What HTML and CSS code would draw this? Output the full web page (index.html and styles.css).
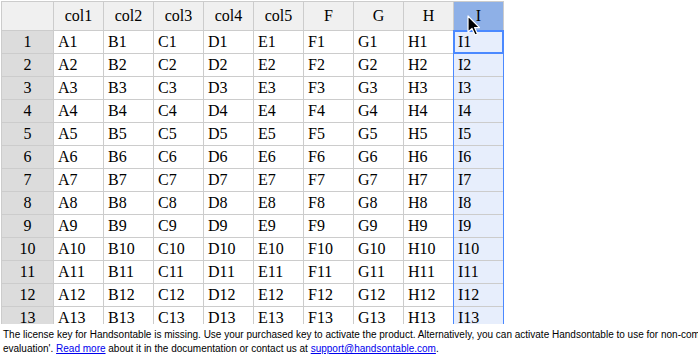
FILE: index.html
```html
<!DOCTYPE html>
<html>
<head>
<meta charset="utf-8">
<link rel="stylesheet" href="styles.css">
</head>
<body>
<div class="hot">
  <div class="grid">
    <div class="corner"></div>
    <div class="ch">col1</div><div class="ch">col2</div><div class="ch">col3</div><div class="ch">col4</div><div class="ch">col5</div><div class="ch">F</div><div class="ch">G</div><div class="ch">H</div><div class="ch ch-active">I</div>
    <div class="rh">1</div><div class="c">A1</div><div class="c">B1</div><div class="c">C1</div><div class="c">D1</div><div class="c">E1</div><div class="c">F1</div><div class="c">G1</div><div class="c">H1</div><div class="c sel">I1</div>
    <div class="rh">2</div><div class="c">A2</div><div class="c">B2</div><div class="c">C2</div><div class="c">D2</div><div class="c">E2</div><div class="c">F2</div><div class="c">G2</div><div class="c">H2</div><div class="c sel">I2</div>
    <div class="rh">3</div><div class="c">A3</div><div class="c">B3</div><div class="c">C3</div><div class="c">D3</div><div class="c">E3</div><div class="c">F3</div><div class="c">G3</div><div class="c">H3</div><div class="c sel">I3</div>
    <div class="rh">4</div><div class="c">A4</div><div class="c">B4</div><div class="c">C4</div><div class="c">D4</div><div class="c">E4</div><div class="c">F4</div><div class="c">G4</div><div class="c">H4</div><div class="c sel">I4</div>
    <div class="rh">5</div><div class="c">A5</div><div class="c">B5</div><div class="c">C5</div><div class="c">D5</div><div class="c">E5</div><div class="c">F5</div><div class="c">G5</div><div class="c">H5</div><div class="c sel">I5</div>
    <div class="rh">6</div><div class="c">A6</div><div class="c">B6</div><div class="c">C6</div><div class="c">D6</div><div class="c">E6</div><div class="c">F6</div><div class="c">G6</div><div class="c">H6</div><div class="c sel">I6</div>
    <div class="rh">7</div><div class="c">A7</div><div class="c">B7</div><div class="c">C7</div><div class="c">D7</div><div class="c">E7</div><div class="c">F7</div><div class="c">G7</div><div class="c">H7</div><div class="c sel">I7</div>
    <div class="rh">8</div><div class="c">A8</div><div class="c">B8</div><div class="c">C8</div><div class="c">D8</div><div class="c">E8</div><div class="c">F8</div><div class="c">G8</div><div class="c">H8</div><div class="c sel">I8</div>
    <div class="rh">9</div><div class="c">A9</div><div class="c">B9</div><div class="c">C9</div><div class="c">D9</div><div class="c">E9</div><div class="c">F9</div><div class="c">G9</div><div class="c">H9</div><div class="c sel">I9</div>
    <div class="rh">10</div><div class="c">A10</div><div class="c">B10</div><div class="c">C10</div><div class="c">D10</div><div class="c">E10</div><div class="c">F10</div><div class="c">G10</div><div class="c">H10</div><div class="c sel">I10</div>
    <div class="rh">11</div><div class="c">A11</div><div class="c">B11</div><div class="c">C11</div><div class="c">D11</div><div class="c">E11</div><div class="c">F11</div><div class="c">G11</div><div class="c">H11</div><div class="c sel">I11</div>
    <div class="rh">12</div><div class="c">A12</div><div class="c">B12</div><div class="c">C12</div><div class="c">D12</div><div class="c">E12</div><div class="c">F12</div><div class="c">G12</div><div class="c">H12</div><div class="c sel">I12</div>
    <div class="rh">13</div><div class="c">A13</div><div class="c">B13</div><div class="c">C13</div><div class="c">D13</div><div class="c">E13</div><div class="c">F13</div><div class="c">G13</div><div class="c">H13</div><div class="c sel">I13</div>
  </div>
  <div class="sel-area"></div>
  <div class="current"></div>
  <svg class="cursor" width="14" height="22" viewBox="0 0 14 22">
    <path d="M1 1 L1 17 L5 13.5 L8 20 L10.5 19 L7.6 12.6 L12.5 12.6 Z" fill="#000" stroke="#fff" stroke-width="1.2" stroke-linejoin="round"/>
  </svg>
</div>
<div class="notice">The license key for Handsontable is missing. Use your purchased key to activate the product. Alternatively, you can activate Handsontable to use for non-commercial purposes by passing the key: 'non-commercial-and-<br>evaluation'. <a href="#">Read more</a> about it in the documentation or contact us at <a href="#">support@handsontable.com</a>.</div>
</body>
</html>
```

FILE: styles.css
```css
html, body {
  margin: 0;
  padding: 0;
  background: #fff;
}

.hot {
  position: relative;
  margin: 1px 0 0 1px;
  height: 323px;
  width: 503px;
  overflow: hidden;
}

.grid {
  display: grid;
  grid-template-columns: 52px repeat(9, 50px);
  grid-template-rows: 29px;
  grid-auto-rows: 23px;
  border-left: 1px solid #ccc;
  border-top: 1px solid #ccc;
  font-family: "Liberation Serif", "Times New Roman", serif;
  font-size: 16px;
  color: #000;
}

.grid > div {
  box-sizing: border-box;
  border-right: 1px solid #ccc;
  border-bottom: 1px solid #ccc;
  white-space: nowrap;
  overflow: hidden;
}

.corner, .ch {
  background: #f0f0f0;
  text-align: center;
  line-height: 28px;
}

.ch-active {
  background: #8eb0e7;
}

.rh {
  background: #dcdcdc;
  text-align: center;
  line-height: 22px;
}

.c {
  padding: 0 4px;
  line-height: 22px;
  background: #fff;
}

.c.sel {
  background: #e7eefc;
}

.sel-area {
  position: absolute;
  left: 452px;
  top: 29px;
  width: 49px;
  height: 300px;
  border: 1px solid #4b89ff;
}

.current {
  position: absolute;
  left: 452px;
  top: 29px;
  width: 47px;
  height: 20px;
  border: 2px solid #4b89ff;
}

.cursor {
  position: absolute;
  left: 466px;
  top: 14px;
}

.notice {
  font-family: "Liberation Sans", Arial, sans-serif;
  font-size: 10px;
  line-height: 14px;
  color: #000;
  white-space: nowrap;
  margin: 4px 0 0 3px;
}

.notice a {
  color: #0000ee;
  text-decoration: underline;
}
```
